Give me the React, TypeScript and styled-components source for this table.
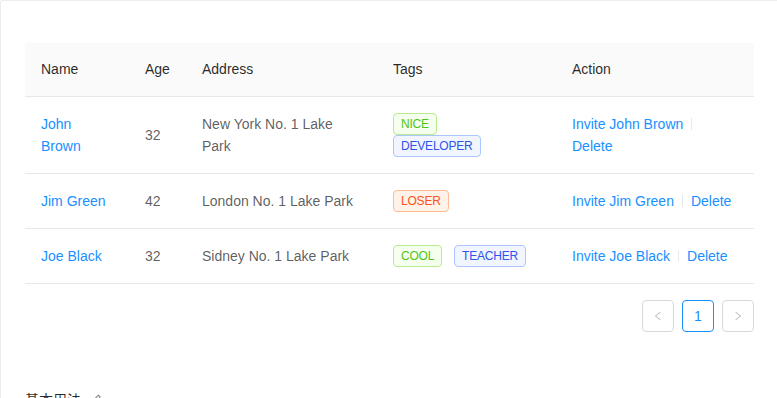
import styled, { createGlobalStyle } from 'styled-components';
import { AiOutlineEdit, AiOutlineLeft, AiOutlineRight } from 'react-icons/ai';

type TagColor = 'green' | 'geekblue' | 'volcano';

type Person = {
    key: string;
    name: string;
    age: number;
    address: string;
    tags: string[];
};

const data: Person[] = [
    { key: '1', name: 'John Brown', age: 32, address: 'New York No. 1 Lake Park', tags: ['nice', 'developer'] },
    { key: '2', name: 'Jim Green', age: 42, address: 'London No. 1 Lake Park', tags: ['loser'] },
    { key: '3', name: 'Joe Black', age: 32, address: 'Sidney No. 1 Lake Park', tags: ['cool', 'teacher'] },
];

const tagColor = (tag: string): TagColor => {
    if (tag === 'loser') return 'volcano';
    return tag.length > 5 ? 'geekblue' : 'green';
};

const palette: Record<TagColor, { fg: string; bg: string; border: string }> = {
    green: { fg: '#52c41a', bg: '#f6ffed', border: '#b7eb8f' },
    geekblue: { fg: '#2f54eb', bg: '#f0f5ff', border: '#adc6ff' },
    volcano: { fg: '#fa541c', bg: '#fff2e8', border: '#ffbb96' },
};

export default function App() {
    return (
        <>
            <GlobalStyle />
            <CodeBox>
                <Demo>
                    <Table>
                        <colgroup>
                            <col style={{ width: 104 }} />
                            <col style={{ width: 57 }} />
                            <col style={{ width: 191 }} />
                            <col style={{ width: 179 }} />
                            <col style={{ width: 198 }} />
                        </colgroup>
                        <thead>
                            <tr>
                                <Th>Name</Th>
                                <Th>Age</Th>
                                <Th>Address</Th>
                                <Th>Tags</Th>
                                <Th>Action</Th>
                            </tr>
                        </thead>
                        <tbody>
                            {data.map((row) => (
                                <tr key={row.key}>
                                    <Td><Link>{row.name}</Link></Td>
                                    <Td>{row.age}</Td>
                                    <Td>{row.address}</Td>
                                    <Td>
                                        {row.tags.map((tag) => (
                                            <span key={tag}>
                                                <Tag color={tagColor(tag)}>{tag.toUpperCase()}</Tag>{' '}
                                            </span>
                                        ))}
                                    </Td>
                                    <Td>
                                        <Actions>
                                            <ActionItem><Link>Invite {row.name}</Link></ActionItem>
                                            <Split />
                                            <ActionItem><Link>Delete</Link></ActionItem>
                                        </Actions>
                                    </Td>
                                </tr>
                            ))}
                        </tbody>
                    </Table>
                    <Pagination>
                        <PageItem disabled><AiOutlineLeft size={12} /></PageItem>
                        <PageItem active>1</PageItem>
                        <PageItem disabled><AiOutlineRight size={12} /></PageItem>
                    </Pagination>
                </Demo>
                <Meta>
                    <Title>
                        基本用法
                        <EditIcon><AiOutlineEdit size={14} /></EditIcon>
                    </Title>
                </Meta>
            </CodeBox>
        </>
    );
}

const GlobalStyle = createGlobalStyle`
  body {
    margin: 0;
    overflow: hidden;
    background: #fff;
    font-family: "Liberation Sans", Arial, "Noto Sans CJK SC", sans-serif;
    font-size: 14px;
    line-height: 22px;
    color: rgba(0, 0, 0, 0.65);
  }
`;

const CodeBox = styled.section`
  width: 779px;
  border: 1px solid #ebedf0;
  border-radius: 2px;
  box-sizing: border-box;
`;

const Demo = styled.div`
  padding: 42px 24px 50px;
`;

const Table = styled.table`
  width: 729px;
  table-layout: fixed;
  border-collapse: separate;
  border-spacing: 0;
`;

const Th = styled.th`
  text-align: left;
  font-weight: 400;
  color: rgba(0, 0, 0, 0.85);
  background: #fafafa;
  padding: 15px 16px 16px;
  border-bottom: 1px solid #e8e8e8;
  &:first-child { border-top-left-radius: 4px; }
  &:last-child { border-top-right-radius: 4px; }
`;

const Td = styled.td`
  padding: 16px;
  border-bottom: 1px solid #e8e8e8;
  vertical-align: middle;
  word-wrap: break-word;
`;

const Link = styled.a`
  color: #1890ff;
  cursor: pointer;
`;

const Tag = styled.span<{ color: TagColor }>`
  display: inline-block;
  vertical-align: top;
  box-sizing: border-box;
  height: 22px;
  padding: 0 7px;
  margin-right: 8px;
  font-size: 12px;
  line-height: 20px;
  letter-spacing: -0.2px;
  border-radius: 4px;
  color: ${(p) => palette[p.color].fg};
  background: ${(p) => palette[p.color].bg};
  border: 1px solid ${(p) => palette[p.color].border};
`;

const Actions = styled.div`
  display: flex;
  flex-wrap: wrap;
  align-items: center;
  column-gap: 8px;
`;

const ActionItem = styled.span`
  white-space: nowrap;
`;

const Split = styled.span`
  width: 1px;
  height: 0.9em;
  background: #e8e8e8;
`;

const Pagination = styled.ul`
  display: flex;
  justify-content: flex-end;
  gap: 8px;
  list-style: none;
  margin: 16px 0;
  padding: 0;
`;

const PageItem = styled.li<{ active?: boolean; disabled?: boolean }>`
  display: flex;
  align-items: center;
  justify-content: center;
  box-sizing: border-box;
  width: 32px;
  height: 32px;
  border: 1px solid ${(p) => (p.active ? '#1890ff' : '#d9d9d9')};
  border-radius: 4px;
  color: ${(p) => (p.active ? '#1890ff' : p.disabled ? 'rgba(0, 0, 0, 0.25)' : 'rgba(0, 0, 0, 0.65)')};
  font-size: 14px;
`;

const Meta = styled.div`
  border-top: 1px solid #ebedf0;
  padding: 0 24px 12px 16px;
`;

const Title = styled.div`
  display: flex;
  align-items: center;
  width: fit-content;
  margin-top: -11px;
  padding: 1px 8px;
  background: #fff;
  color: rgba(0, 0, 0, 0.85);
  font-weight: 400;
`;

const EditIcon = styled.span`
  display: inline-flex;
  margin-left: 8px;
  color: rgba(0, 0, 0, 0.45);
`;
